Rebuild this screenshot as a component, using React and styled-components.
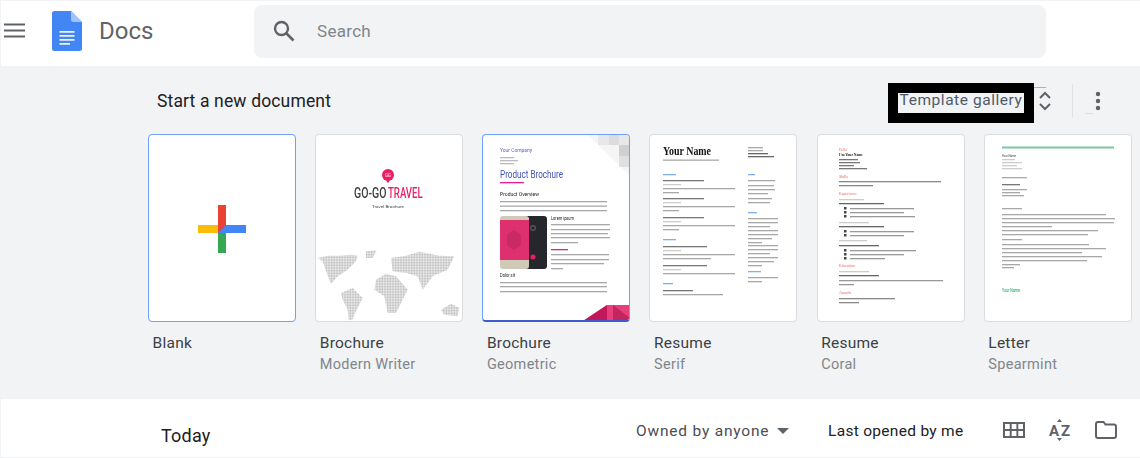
import React from "react";
import styled, { createGlobalStyle } from "styled-components";

const GlobalStyle = createGlobalStyle`
  html, body {
    margin: 0;
    padding: 0;
    background: #f1f3f4;
    font-family: Roboto, "Liberation Sans", sans-serif;
  }
`;

const Page = styled.div`
  width: 1140px;
  height: 458px;
  overflow: hidden;
  box-sizing: border-box;
  padding: 1px 0 0 1px;
  display: flex;
  flex-direction: column;
`;

const Header = styled.header`
  height: 65px;
  flex: none;
  box-sizing: border-box;
  padding-bottom: 5px;
  background: #fff;
  display: flex;
  align-items: center;
`;

const MenuButton = styled.div`
  width: 51px;
  padding-left: 3px;
  box-sizing: border-box;
  flex: none;
  display: flex;
`;

const Brand = styled.div`
  width: 202px;
  flex: none;
  display: flex;
  align-items: center;
  gap: 17px;
  font-size: 24px;
  color: #5f6368;
`;

const SearchBar = styled.div`
  width: 792px;
  height: 53px;
  border-radius: 8px;
  background: #f1f3f4;
  display: flex;
  align-items: center;
  padding-left: 19px;
  box-sizing: border-box;
  gap: 22px;
  color: #80868b;
  font-size: 17px;
  letter-spacing: 0.3px;
`;

const Templates = styled.section`
  height: 333px;
  flex: none;
  display: flex;
  flex-direction: column;
`;

const TemplatesHead = styled.div`
  height: 68px;
  flex: none;
  display: flex;
  align-items: center;
  padding-left: 156px;
`;

const HeadTitle = styled.h2`
  margin: 2px 0 0;
  width: 731px;
  font-size: 17.5px;
  font-weight: 400;
  letter-spacing: 0.15px;
  color: #202124;
`;

const GalleryBox = styled.div`
  width: 146px;
  height: 40px;
  margin-top: 6px;
  box-sizing: border-box;
  border: 10px solid #000;
  background: #f1f3f4;
  color: #4f5b6b;
  font-size: 15.5px;
  letter-spacing: 0.55px;
  line-height: 15px;
  text-align: center;
  white-space: nowrap;
  flex: none;
`;

const GreenTick = styled.div`
  position: absolute;
  left: 0;
  top: 3px;
  width: 12px;
  height: 1px;
  background: #7fcfa0;
`;

const HeadActions = styled.div`
  position: relative;
  display: flex;
  align-items: center;
  height: 34px;
  margin-top: 2px;
  padding-left: 4px;
`;

const Divider = styled.div`
  width: 1px;
  height: 34px;
  background: #e0e2e4;
  margin: 0 22px 0 20px;
`;

const BlueTick = styled.div`
  position: absolute;
  left: 51px;
  top: 29px;
  width: 8px;
  height: 1px;
  background: #d2e3fc;
`;

const CardGrid = styled.div`
  display: grid;
  grid-template-columns: repeat(6, 148px);
  column-gap: 19.15px;
  padding-left: 147px;
`;

const Card = styled.div`
  display: flex;
  flex-direction: column;
`;

const Thumb = styled.div`
  width: 148px;
  height: 188px;
  box-sizing: border-box;
  border-radius: 4px;
  background: #fff;
  overflow: hidden;
  border: 1px solid ${(p) => (p.$active ? "#6ea0f5" : "#dadce0")};
  ${(p) => (p.$deep ? "border-bottom: 2px solid #3f5bd0;" : "")}
  display: flex;
  align-items: center;
  justify-content: center;
`;

const Drawing = styled.svg`
  width: 148px;
  height: 188px;
  flex: none;
  filter: blur(0.5px);
`;

const PlusDrawing = styled(Drawing)`
  filter: none;
`;

const CardTitle = styled.div`
  margin: 12px 0 0 4.6px;
  font-size: 15.5px;
  line-height: 18px;
  letter-spacing: 0.25px;
  color: #3c4043;
`;

const CardSub = styled.div`
  margin: 4px 0 0 4.6px;
  font-size: 14.5px;
  line-height: 18px;
  letter-spacing: 0.3px;
  color: #80868b;
`;

const Recent = styled.section`
  height: 58px;
  flex: none;
  box-sizing: border-box;
  padding-top: 6px;
  background: #fff;
  display: flex;
  align-items: center;
  padding-left: 160px;
`;

const RecentTitle = styled.h2`
  margin: 8px 0 0;
  width: 475px;
  font-size: 18px;
  font-weight: 400;
  letter-spacing: 0.2px;
  color: #202124;
`;

const Owned = styled.div`
  width: 192px;
  display: flex;
  align-items: center;
  gap: 8px;
  font-size: 15.5px;
  letter-spacing: 0.8px;
  color: #4a4e54;
`;

const Caret = styled.span`
  width: 0;
  height: 0;
  border-left: 6px solid transparent;
  border-right: 6px solid transparent;
  border-top: 6px solid #5f6368;
`;

const Sort = styled.div`
  width: 175px;
  font-size: 15.5px;
  letter-spacing: 0.3px;
  color: #202124;
`;

const ToolIcons = styled.div`
  display: flex;
  align-items: center;
  gap: 24px;
  margin-top: -3px;
`;

const MenuIcon = () => (
  <svg width="22" height="16" viewBox="0 0 22 16">
    <path d="M0 1.500h21M0 7.500h21M0 13.500h21" stroke="#5f6368" strokeWidth="2" fill="none" />
  </svg>
);

const DocsLogo = () => (
  <svg width="30" height="40" viewBox="0 0 30 40">
    <path d="M2.500 0H19l11 11v26.500a2.500 2.500 0 0 1-2.500 2.500h-25A2.500 2.500 0 0 1 0 37.500v-35A2.500 2.500 0 0 1 2.500 0z" fill="#4285f4" />
    <path d="M19 0l11 11h-8.500A2.500 2.500 0 0 1 19 8.500z" fill="#a1c2fa" />
    <path d="M7.500 20h15v1.800h-15zM7.500 24h15v1.800h-15zM7.500 28h15v1.800h-15zM7.500 32h10.500v1.800H7.500z" fill="#f1f1f1" />
  </svg>
);

const SearchIcon = () => (
  <svg width="22" height="22" viewBox="0 0 22 22">
    <circle cx="8.500" cy="8.500" r="6.500" stroke="#5f6368" strokeWidth="2.400" fill="none" />
    <path d="M13.500 13.500L20.500 20.500" stroke="#5f6368" strokeWidth="2.600" />
  </svg>
);

const UnfoldIcon = () => (
  <svg width="14" height="20" viewBox="0 0 14 20">
    <path d="M2 7l5-5 5 5M2 13l5 5 5-5" stroke="#5f6368" strokeWidth="2" fill="none" />
  </svg>
);

const DotsIcon = () => (
  <svg width="6" height="20" viewBox="0 0 6 20">
    <circle cx="3" cy="3" r="2.200" fill="#5f6368" />
    <circle cx="3" cy="10" r="2.200" fill="#5f6368" />
    <circle cx="3" cy="17" r="2.200" fill="#5f6368" />
  </svg>
);

const GridIcon = () => (
  <svg width="22" height="16" viewBox="0 0 22 16">
    <path d="M0 0h22v16H0z" fill="#5f6368" />
    <path d="M2 2h4.700v5H2zM8.700 2h4.700v5H8.700zM15.300 2H20v5h-4.700zM2 9h4.700v5H2zM8.700 9h4.700v5H8.700zM15.300 9H20v5h-4.700z" fill="#fff" />
  </svg>
);

// the glyphs of the sort icon are real text, the little arrows are drawn
const SortIcon = () => (
  <svg width="22" height="22" viewBox="0 0 22 22">
    <text x="0" y="16.500" fontSize="15" fontWeight="700" fontFamily="Roboto, sans-serif" fill="#5f6368" textLength="21">AZ</text>
    <path d="M8 3L10.500 0 13 3zM8 19l2.500 3 2.500-3z" fill="#5f6368" />
  </svg>
);

const FolderIcon = () => (
  <svg width="22" height="18" viewBox="0 0 22 18">
    <path d="M1 3a2 2 0 0 1 2-2h5.500l2 2.500H19a2 2 0 0 1 2 2V15a2 2 0 0 1-2 2H3a2 2 0 0 1-2-2z" stroke="#5f6368" strokeWidth="2" fill="none" />
  </svg>
);

const Bars = ({ items }) =>
  items.map(([x, y, w, c = "#a8a8a8", h = 1.300], i) => (
    <rect key={i} x={x} y={y} width={w} height={h} fill={c} />
  ));

const Words = ({ x, y, size, width, color = "#202124", family = "Roboto, sans-serif", weight = 400, children }) => (
  <text
    x={x}
    y={y}
    fontSize={size}
    fontFamily={family}
    fontWeight={weight}
    fill={color}
    textLength={width}
    lengthAdjust="spacingAndGlyphs"
  >
    {children}
  </text>
);

const BlankArt = () => (
  <PlusDrawing viewBox="0 0 148 188">
    <rect x="70" y="71" width="8" height="28" fill="#ea4335" />
    <rect x="70" y="99" width="8" height="20" fill="#34a853" />
    <rect x="50" y="91" width="20" height="8" fill="#fbbc05" />
    <path d="M70 99l8-8h20v8z" fill="#4285f4" />
  </PlusDrawing>
);

const mapPoints = (pts) => pts.map(([x, y]) => `${(x - 527) / 3},${(y - 13) / 3}`).join(" ");

const continents = [
  [[535, 385], [565, 378], [600, 378], [635, 375], [655, 378], [650, 395], [625, 420], [595, 440], [575, 462], [562, 430], [550, 395]],
  [[605, 490], [640, 475], [670, 505], [650, 545], [638, 572], [628, 570], [625, 540], [610, 510]],
  [[710, 450], [740, 432], [770, 440], [805, 480], [790, 510], [770, 550], [745, 550], [735, 500], [705, 480]],
  [[755, 385], [800, 378], [840, 366], [900, 378], [945, 380], [925, 420], [880, 440], [850, 480], [835, 440], [800, 430], [760, 425]],
  [[905, 540], [935, 522], [960, 535], [955, 560], [915, 555]],
  [[680, 365], [712, 362], [700, 385], [680, 385]],
];

const TravelArt = () => (
  <Drawing viewBox="0 0 148 188">
    <defs>
      <pattern id="mapDots" width="1.600" height="1.600" patternUnits="userSpaceOnUse">
        <rect width="1.200" height="1.200" fill="#b8b8b8" />
      </pattern>
    </defs>
    <circle cx="73" cy="41" r="6" fill="#e91e63" />
    <path d="M71 46.500h4L73 49z" fill="#e91e63" />
    <Words x="70" y="43" size="5" width="6" color="#fff">GG</Words>
    <text transform="translate(39 64) scale(.68 1)" fontSize="15.500" fontWeight="500" fontFamily="Roboto, sans-serif" fill="#3c4043">GO-GO</text>
    <text transform="translate(73 64) scale(.62 1)" fontSize="15.500" fontWeight="500" fontFamily="Roboto, sans-serif" fill="#e91e63">TRAVEL</text>
    <Words x="57" y="73.500" size="3.800" width="32" color="#444">Travel Brochure</Words>
    {continents.map((c, i) => (
      <polygon key={i} points={mapPoints(c)} fill="url(#mapDots)" />
    ))}
  </Drawing>
);

const GeometricArt = () => (
  <Drawing viewBox="0 0 148 188">
    <path d="M105 0h43v42z" fill="#f5f5f5" />
    <path d="M116 0h11v11h-11zM137 0h11v11h-11z" fill="#e8e8e8" />
    <path d="M137 11h11v11h-11z" fill="#d0d0d0" />
    <path d="M137 22h11v11h-11z" fill="#e0e0e0" />
    <path d="M127 0h10v11h-10z" fill="#dcdcdc" />
    <Words x="18" y="18" size="5.500" width="32" color="#5a5fd8">Your Company</Words>
    <Bars items={[[18, 23, 14, "#bbb"], [18, 26, 18, "#bbb"], [18, 29, 14, "#bbb"]]} />
    <Words x="18" y="43.500" size="10" width="63" color="#3f51b5">Product Brochure</Words>
    <Bars items={[[18, 48, 24, "#e91e8c"]]} />
    <Words x="18" y="62" size="6" width="39">Product Overview</Words>
    <Bars items={[[18, 67, 107], [18, 71.500, 107], [18, 76, 107]]} />
    <rect x="42" y="82" width="23" height="53" rx="3" fill="#26272c" />
    <circle cx="51" cy="94" r="3" fill="#55565a" />
    <circle cx="51" cy="94" r="1.600" fill="#222" />
    <rect x="18" y="82" width="29" height="53" rx="3" fill="#cfc9b8" />
    <rect x="18" y="86" width="29" height="40" fill="#de2f6e" />
    <path d="M32 96l7 5v10l-7 5-7-5v-10z" fill="#c92a63" />
    <circle cx="51" cy="123" r="2.500" fill="#e91e63" />
    <Words x="69" y="86" size="5.500" width="23">Lorem ipsum</Words>
    <Bars items={[[69, 90, 59], [69, 95, 59], [69, 99, 57], [69, 103, 59], [69, 108, 27], [69, 115, 17, "#e91e8c"], [69, 120, 58], [69, 125, 58], [69, 129, 53], [69, 134, 12]]} />
    <Words x="18" y="143" size="5" width="15">Dolor sit</Words>
    <Bars items={[[18, 148, 107], [18, 152, 107], [18, 157, 107]]} />
    <path d="M101 187l24-16h23v16z" fill="#e83e7b" />
    <path d="M101 187l24-16v16z" fill="#c2185b" />
    <path d="M131 171l17 13v3h-17z" fill="#c2265f" />
  </Drawing>
);

const SerifArt = () => (
  <Drawing viewBox="0 0 148 188">
    <Words x="14" y="21" size="11.500" width="48" color="#111" weight={700} family="'Liberation Serif', serif">Your Name</Words>
    <Bars
      items={[
        [14, 25.500, 56],
        [99, 13, 15], [99, 16, 15], [99, 19, 20, "#666"], [99, 22, 26, "#666"],
        [14, 40, 13, "#7fb0ea"],
        [14, 46, 41, "#777"], [14, 50, 18, "#ccc"], [14, 54, 72], [14, 58, 16],
        [14, 64, 41, "#777"], [14, 68, 18, "#ccc"], [14, 72, 72], [14, 76, 16],
        [14, 83, 41, "#777"], [14, 87, 18, "#ccc"], [14, 91, 72], [14, 95, 16],
        [14, 105, 13, "#7fb0ea"],
        [14, 112, 44, "#777"], [14, 116, 18, "#ccc"], [14, 120, 72], [14, 124, 48],
        [14, 131, 44, "#777"], [14, 135, 18, "#ccc"], [14, 139, 72],
        [14, 149, 10, "#7fb0ea"],
        [14, 156, 30, "#777"], [14, 160, 60],
        [99, 40, 7, "#7fb0ea"],
        [99, 46, 27], [99, 51, 26], [99, 55, 27], [99, 59, 20], [99, 64, 24], [99, 68, 22],
        [99, 78, 9, "#7fb0ea"],
        [99, 84, 30], [99, 88, 30], [99, 92, 22], [99, 96, 30], [99, 100, 30], [99, 104, 24], [99, 108, 14],
        [99, 111, 30], [99, 115, 30], [99, 119, 22], [99, 123, 30], [99, 127, 26], [99, 131, 14],
        [99, 137, 13, "#7fb0ea"],
        [99, 143, 30], [99, 147, 14],
      ]}
    />
  </Drawing>
);

const CoralArt = () => (
  <Drawing viewBox="0 0 148 188">
    <Words x="22" y="17" size="4.500" width="8" color="#f06060" family="'Liberation Serif', serif">Hello</Words>
    <Words x="22" y="21.500" size="4.500" width="24" color="#222" family="'Liberation Serif', serif" weight={700}>I'm Your Name</Words>
    <Bars items={[[22, 25, 19, "#777"], [22, 28, 21, "#777"], [22, 31, 15, "#777"], [22, 34, 28, "#777"]]} />
    <Words x="22" y="43.500" size="4.500" width="9" color="#f06060" family="'Liberation Serif', serif">Skills</Words>
    <Bars items={[[22, 47, 102, "#888"], [22, 51, 34, "#888"]]} />
    <Words x="22" y="60.500" size="4.500" width="18" color="#f06060" family="'Liberation Serif', serif">Experience</Words>
    <Bars
      items={[
        [22, 65, 25, "#ccc"], [22, 69, 45, "#666"],
        [33, 74, 64, "#999"], [33, 78, 54, "#999"], [33, 82, 65, "#999"],
        [22, 88, 30, "#ccc"], [22, 92, 45, "#666"],
        [33, 97, 64, "#999"], [33, 101, 54, "#999"],
        [22, 106, 28, "#ccc"], [22, 111, 40, "#666"],
        [33, 116, 66, "#999"], [33, 120, 54, "#999"], [33, 124, 35, "#999"],
      ]}
    />
    <Bars
      items={[
        [27, 73, 2.500, "#444", 2.500], [27, 77, 2.500, "#444", 2.500], [27, 81, 2.500, "#444", 2.500],
        [27, 96, 2.500, "#444", 2.500], [27, 100, 2.500, "#444", 2.500],
        [27, 115, 2.500, "#444", 2.500], [27, 119, 2.500, "#444", 2.500], [27, 123, 2.500, "#444", 2.500],
      ]}
    />
    <Words x="22" y="133" size="4.500" width="16" color="#f06060" family="'Liberation Serif', serif">Education</Words>
    <Bars items={[[22, 137, 30, "#ccc"], [22, 141, 40, "#666"], [22, 146, 104, "#999"], [22, 150, 15, "#999"]]} />
    <Words x="22" y="160" size="4.500" width="12" color="#f06060" family="'Liberation Serif', serif">Awards</Words>
    <Bars items={[[22, 164, 56, "#888"], [22, 168, 20, "#888"]]} />
  </Drawing>
);

const LetterArt = () => (
  <Drawing viewBox="0 0 148 188">
    <rect x="18" y="12.500" width="112" height="2" fill="#7cc8a0" />
    <Words x="18" y="23" size="3.500" width="14" color="#333">Your Name</Words>
    <Bars
      items={[
        [18, 25, 13, "#ccc"], [18, 28, 20, "#ccc"], [18, 31, 15, "#ccc"], [18, 34, 20, "#ccc"],
        [18, 43, 25],
        [18, 50, 18, "#777"], [18, 55, 25], [18, 58, 18], [18, 61, 22],
        [18, 74, 20],
        [18, 80, 104], [18, 84, 113], [18, 88, 112], [18, 92, 50],
        [18, 96, 96], [18, 100, 86], [18, 105, 20],
        [18, 110, 87], [18, 114, 104], [18, 118, 80], [18, 122, 100], [18, 126, 85], [18, 130, 18],
        [18, 133, 12],
      ]}
    />
    <Words x="18" y="158" size="4.500" width="18" color="#17a85a">Your Name</Words>
  </Drawing>
);

const cards = [
  { title: "Blank", art: <BlankArt />, active: true },
  { title: "Brochure", sub: "Modern Writer", art: <TravelArt /> },
  { title: "Brochure", sub: "Geometric", art: <GeometricArt />, active: true, deep: true },
  { title: "Resume", sub: "Serif", art: <SerifArt /> },
  { title: "Resume", sub: "Coral", art: <CoralArt /> },
  { title: "Letter", sub: "Spearmint", art: <LetterArt /> },
];

const App = () => (
  <>
    <GlobalStyle />
    <Page>
      <Header>
        <MenuButton>
          <MenuIcon />
        </MenuButton>
        <Brand>
          <DocsLogo />
          <span>Docs</span>
        </Brand>
        <SearchBar>
          <SearchIcon />
          <span>Search</span>
        </SearchBar>
      </Header>
      <Templates>
        <TemplatesHead>
          <HeadTitle>Start a new document</HeadTitle>
          <GalleryBox>Template gallery</GalleryBox>
          <HeadActions>
            <GreenTick />
            <UnfoldIcon />
            <Divider />
            <BlueTick />
            <DotsIcon />
          </HeadActions>
        </TemplatesHead>
        <CardGrid>
          {cards.map((c, i) => (
            <Card key={i}>
              <Thumb $active={c.active} $deep={c.deep}>{c.art}</Thumb>
              <CardTitle>{c.title}</CardTitle>
              {c.sub && <CardSub>{c.sub}</CardSub>}
            </Card>
          ))}
        </CardGrid>
      </Templates>
      <Recent>
        <RecentTitle>Today</RecentTitle>
        <Owned>
          <span>Owned by anyone</span>
          <Caret />
        </Owned>
        <Sort>Last opened by me</Sort>
        <ToolIcons>
          <GridIcon />
          <SortIcon />
          <FolderIcon />
        </ToolIcons>
      </Recent>
    </Page>
  </>
);

export default App;
